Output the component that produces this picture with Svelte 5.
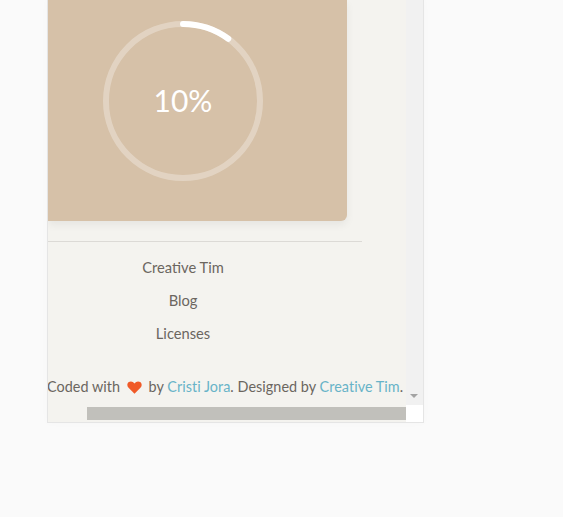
<script>
  const links = ['Creative Tim', 'Blog', 'Licenses'];
  const r = 77;
  const circumference = 2 * Math.PI * r;
  const progress = 0.1;
</script>

<div class="page">
  <div class="frame">
    <div class="upper">
      <main class="content">
        <section class="card">
          <div class="gauge">
            <svg width="166" height="166" viewBox="0 0 166 166" aria-hidden="true">
              <circle cx="83" cy="83" r={r} fill="none" stroke="rgba(255,255,255,0.3)" stroke-width="6" />
              <circle
                cx="83"
                cy="83"
                r={r}
                fill="none"
                stroke="#fff"
                stroke-width="6"
                stroke-linecap="round"
                stroke-dasharray="{circumference * progress} {circumference}"
                transform="rotate(-90 83 83)"
              />
            </svg>
            <span class="value">10%</span>
          </div>
        </section>
        <hr class="rule" />
        <nav class="links">
          {#each links as link}
            <span>{link}</span>
          {/each}
        </nav>
        <footer class="credit">
          Coded with <svg class="heart" width="15" height="13" viewBox="0 0 16 14" aria-hidden="true"><path d="M8 13.6 1.6 7.4C-.4 5.4 0 2.4 1.9 1.1 3.9-.2 6.5.4 8 2.6 9.5.4 12.1-.2 14.1 1.1 16 2.4 16.4 5.4 14.4 7.4Z" fill="#f05a28" /></svg> by <span class="accent">Cristi Jora</span>. Designed by <span class="accent">Creative Tim</span>.
        </footer>
      </main>
      <div class="vtrack"><span class="arrow"></span></div>
    </div>
    <div class="lower">
      <div class="htrack"><div class="thumb"></div></div>
      <div class="corner"></div>
    </div>
  </div>
</div>

<style>
  :global(body) {
    margin: 0;
    background: #fafafa;
  }
  .page {
    height: 517px;
    padding-left: 47px;
    box-sizing: border-box;
    overflow: hidden;
    font-family: "Lato", "Noto Sans", sans-serif;
  }
  .frame {
    width: 377px;
    height: 423px;
    box-sizing: border-box;
    border: 1px solid #e5e5e5;
    border-top: 0;
    box-shadow: 0 0 8px rgba(0, 0, 0, 0.02);
    display: flex;
    flex-direction: column;
    background: #fff;
  }
  .upper {
    flex: 1;
    min-height: 0;
    display: flex;
  }
  .content {
    width: 358px;
    background: #f4f3ef;
    overflow: hidden;
  }
  .card {
    width: 299px;
    height: 221px;
    box-sizing: border-box;
    padding-top: 18px;
    padding-left: 52px;
    background: #d6c1a8;
    border-bottom-right-radius: 6px;
    box-shadow: 0 4px 8px rgba(0, 0, 0, 0.06);
  }
  .gauge {
    position: relative;
    width: 166px;
    height: 166px;
  }
  .gauge svg {
    display: block;
  }
  .value {
    position: absolute;
    inset: 0 0 2px;
    display: flex;
    align-items: center;
    justify-content: center;
    color: #fff;
    font-size: 30px;
    font-weight: 400;
  }
  .rule {
    width: 314px;
    height: 1px;
    margin: 20px 0 0;
    border: 0;
    background: #dcdad6;
  }
  .links {
    width: 270px;
    padding-top: 9px;
    display: flex;
    flex-direction: column;
    align-items: center;
    color: #6b665f;
    font-size: 14.7px;
    line-height: 33px;
  }
  .credit {
    margin-top: 27px;
    margin-left: -1px;
    white-space: nowrap;
    color: #6b665f;
    font-size: 14.4px;
    letter-spacing: 0.04px;
    line-height: 20px;
  }
  .heart {
    margin: 0 3px;
    vertical-align: -2px;
  }
  .accent {
    color: #68b3c8;
  }
  .vtrack {
    flex: 1;
    position: relative;
    background: #f1f1f1;
  }
  .arrow {
    position: absolute;
    left: 4px;
    bottom: 7px;
    border-left: 4px solid transparent;
    border-right: 4px solid transparent;
    border-top: 4px solid #a3a3a3;
  }
  .lower {
    height: 17px;
    display: flex;
  }
  .htrack {
    width: 358px;
    box-sizing: border-box;
    padding: 2px 0 2px 39px;
    background: #f4f3ef;
  }
  .thumb {
    height: 13px;
    background: #c1c0bb;
  }
  .corner {
    flex: 1;
    background: #fff;
  }
</style>
